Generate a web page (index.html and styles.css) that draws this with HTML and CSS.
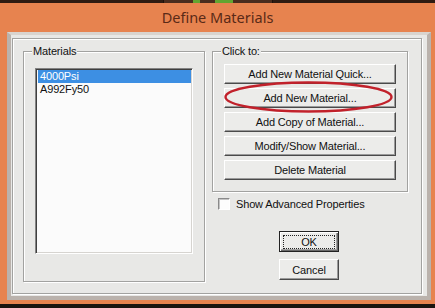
FILE: index.html
```html
<!DOCTYPE html>
<html>
<head>
	<meta charset="utf-8">
	<title>Define Materials</title>
	<link rel="stylesheet" href="styles.css">
</head>
<body>
	<div class="taskbar">
		<span class="tb-dark"></span>
		<span class="tb-mid">
			<i class="tb-green tb-green-a"></i>
			<i class="tb-green tb-green-b"></i>
		</span>
		<span class="tb-dark"></span>
	</div>
	<div class="titlebar">Define Materials</div>
	<div class="frame">
		<div class="client">
			<div class="etched">
				<div class="group group-materials">
					<span class="group-label">Materials</span>
					<ul class="listbox">
						<li class="selected">4000Psi</li>
						<li>A992Fy50</li>
					</ul>
				</div>
				<div class="right-col">
					<div class="group group-click">
						<span class="group-label">Click to:</span>
						<div class="button-stack">
							<button class="btn wide">Add New Material Quick...</button>
							<button class="btn wide">Add New Material...</button>
							<button class="btn wide">Add Copy of Material...</button>
							<button class="btn wide">Modify/Show Material...</button>
							<button class="btn wide">Delete Material</button>
							<!-- red marker drawn over the second button -->
							<svg class="ring" width="170" height="33" viewBox="0 0 170 33">
								<ellipse cx="84.5" cy="16" rx="83" ry="14.5" fill="none" stroke="#c1212b" stroke-width="2.4"/>
							</svg>
						</div>
					</div>
					<label class="check-row"><span class="checkbox"></span>Show Advanced Properties</label>
					<div class="dialog-buttons">
						<button class="btn small default"><span class="focus">OK</span></button>
						<button class="btn small">Cancel</button>
					</div>
				</div>
			</div>
		</div>
	</div>
	<div class="bottom-gap"></div>
	<div class="desk"></div>
</body>
</html>
```

FILE: styles.css
```css
* {
	margin: 0px;
	padding: 0px;
	box-sizing: border-box;
}

body {
	width: 435px;
	height: 308px;
	overflow: hidden;
	background-color: #e7834f;
	display: flex;
	flex-direction: column;
	font-family: "Liberation Sans", Arial, sans-serif;
	font-size: 11px;
	letter-spacing: -0.15px;
	color: #111;
}

/* strip of the taskbar/desktop above the window */
.taskbar {
	height: 3px;
	display: flex;
	background-color: #2f1b12;
}

.tb-dark {
	flex: 1;
}

.tb-mid {
	width: 110px;
	position: relative;
	background-color: #4a2c1e;
	border-left: 1px solid #1c100a;
	border-right: 1px solid #1c100a;
}

.tb-green {
	position: absolute;
	top: 0;
	height: 3px;
	background-color: #62a531;
}

.tb-green-a {
	left: 29px;
	width: 7px;
}

.tb-green-b {
	left: 51px;
	width: 18px;
}

.titlebar {
	height: 29px;
	display: flex;
	justify-content: center;
	align-items: center;
	padding-bottom: 2px;
	font-family: "Noto Sans", "Open Sans", sans-serif;
	font-size: 14.5px;
	letter-spacing: 0;
	color: #5a2a17;
}

.frame {
	height: 268px;
	margin: 0 4px 0 7px;
	border: 4px solid #bab2ac;
	border-top: 3px solid #d9d4cf;
	background-color: #e8e8e6;
}

.client {
	height: 100%;
	padding: 3px 5px 2px 1px;
}

.etched {
	height: 100%;
	border: 1px solid #a2a2a0;
	box-shadow: inset 1px 1px #fff, 1px 1px #fff;
	display: flex;
	align-items: flex-start;
	gap: 7px;
	padding: 12px 0 0 10px;
}

.group {
	position: relative;
	border: 1px solid #a2a2a0;
	box-shadow: inset 1px 1px #fff, 1px 1px #fff;
}

.group-label {
	position: absolute;
	top: -7px;
	left: 8px;
	padding: 0 1px;
	line-height: 13px;
	background-color: #e8e8e6;
}

.group-materials {
	width: 182px;
	height: 231px;
	padding: 16px 0 0 11px;
}

.listbox {
	list-style: none;
	width: 158px;
	height: 186px;
	background-color: #fbfbfb;
	border: 1px solid;
	border-color: #848484 #fff #fff #848484;
	box-shadow: inset 1px 1px #3f3f3f, inset -1px -1px #d6d4d0;
	padding: 1px 1px 0 2px;
}

.listbox li {
	height: 13px;
	line-height: 13px;
	padding-left: 2px;
}

.listbox li.selected {
	background-color: #3d8fe3;
	color: #fff;
}

.right-col {
	width: 196px;
	display: flex;
	flex-direction: column;
}

.group-click {
	height: 141px;
	padding: 12px 0 0 11px;
}

.button-stack {
	position: relative;
	display: flex;
	flex-direction: column;
	gap: 4px;
}

.btn {
	font-family: "Liberation Sans", Arial, sans-serif;
	font-size: 11px;
	letter-spacing: -0.15px;
	color: #111;
	background-color: #ececea;
	border: 1px solid;
	border-color: #fff #4a4a4a #4a4a4a #fff;
	box-shadow: inset -1px -1px #9a9a9a;
	display: flex;
	justify-content: center;
	align-items: center;
}

.btn.wide {
	width: 172px;
	height: 20px;
}

.ring {
	position: absolute;
	left: 0;
	top: 17px;
}

.check-row {
	display: flex;
	align-items: center;
	gap: 6px;
	height: 12px;
	margin: 6px 0 0 6px;
	line-height: 12px;
}

.checkbox {
	width: 12px;
	height: 12px;
	background-color: #fdfdfd;
	border: 1px solid;
	border-color: #8a8a8a #fff #fff #8a8a8a;
	box-shadow: inset 1px 1px #c4c4c4;
}

.dialog-buttons {
	display: flex;
	flex-direction: column;
	gap: 7px;
	margin: 21px 0 0 67px;
}

.btn.small {
	width: 60px;
	height: 21px;
}

.btn.default {
	border: 1px solid #222;
	box-shadow: inset 1px 1px #fff, inset -1px -1px #6a6a6a, inset -2px -2px #a0a0a0;
}

.focus {
	width: 52px;
	height: 14px;
	border: 1px dotted #222;
	display: flex;
	justify-content: center;
	align-items: center;
}

.bottom-gap {
	height: 4px;
}

.desk {
	flex: 1;
	background-color: #1b1410;
}
```
